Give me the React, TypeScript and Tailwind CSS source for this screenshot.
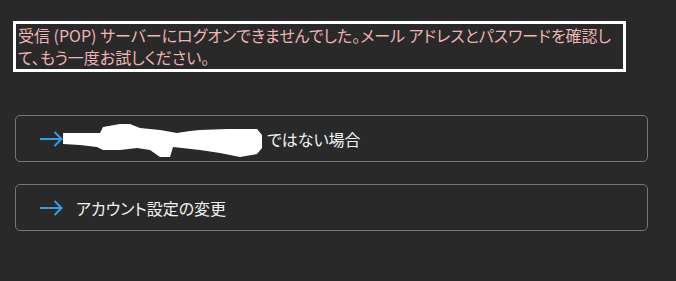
import React from "react";

const Arrow = () => (
  <svg width="23" height="16" viewBox="0 0 23 16" fill="none" className="shrink-0">
    <path d="M0 8H22" stroke="#3a9be5" strokeWidth="2" />
    <path d="M14.5 1L21.5 8L14.5 15" stroke="#3a9be5" strokeWidth="2" />
  </svg>
);

const Scribble = () => (
  <svg width="204" height="36" viewBox="0 0 204 36" className="shrink-0 mt-[5px]">
    <path
      d="M0 10 L37 10 L40 4 L57 1 L67 1 L77 5 L97 7 L114 10 L127 8 L137 7 L164 6 L194 6 L199 12 L199 25 L194 31 L177 34 L157 30 L137 27 L110 24 L107 34 L97 34 L87 27 L74 25 L57 27 L40 27 L34 24 L17 22 L0 21 Z"
      fill="#ffffff"
    />
  </svg>
);

export default function App() {
  return (
    <div
      className="w-[676px] h-[281px] bg-[#292929] overflow-hidden"
      style={{ fontFamily: '"Noto Sans CJK JP", "Noto Sans", sans-serif', fontFeatureSettings: '"palt"' }}
    >
      <div className="pt-[21px] pl-[13px]">
        <div className="w-[613px] border-[3px] border-white pl-[2px] pb-[1px] whitespace-nowrap text-[#f0b4b4] text-[16px] leading-[22px]">
          受信 (POP) サーバーにログオンできませんでした。メール アドレスとパスワードを確認し
          <br />
          て、もう一度お試しください。
        </div>
      </div>
      <div className="mt-[43px] ml-[15px] w-[633px] flex flex-col gap-[22px]">
        <div className="h-[47px] border border-[#767676] rounded-[5px] flex items-center pl-[24px] text-[16px] text-[#f2f2f2]">
          <Arrow />
          <Scribble />
          <span>ではない場合</span>
        </div>
        <div className="h-[47px] border border-[#767676] rounded-[5px] flex items-center pl-[24px] text-[16px] text-[#f2f2f2]">
          <Arrow />
          <span className="ml-[13px]">アカウント設定の変更</span>
        </div>
      </div>
    </div>
  );
}
